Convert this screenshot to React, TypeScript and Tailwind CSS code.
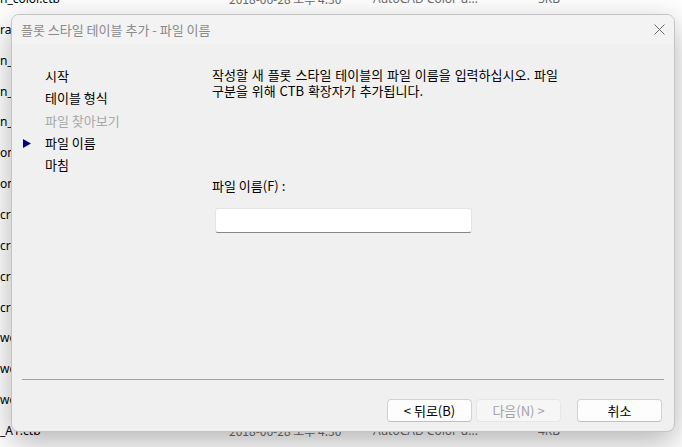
import React from "react";

const files = [
  { name: "n_color.ctb", date: "2018-06-28 오후 4:30", type: "AutoCAD Color-d...", size: "5KB" },
  { name: "rayscale.ctb" },
  { name: "n_color.ctb" },
  { name: "n_color.ctb" },
  { name: "n_color.ctb" },
  { name: "ome.ctb" },
  { name: "ome.ctb" },
  { name: "creening 100%.ctb" },
  { name: "creening 25%.ctb" },
  { name: "creening 50%.ctb" },
  { name: "creening 75%.ctb" },
  { name: "wc.ctb" },
  { name: "wc.ctb" },
  { name: "wc.ctb" },
  { name: "_A1.ctb", date: "2018-06-28 오후 4:30", type: "AutoCAD Color-d...", size: "4KB" },
];

const steps = [
  { label: "시작", state: "done" },
  { label: "테이블 형식", state: "done" },
  { label: "파일 찾아보기", state: "skip" },
  { label: "파일 이름", state: "current" },
  { label: "마침", state: "done" },
];

const korean = { fontFamily: '"Noto Sans CJK KR", "Noto Sans", sans-serif' };

const FileList = () => (
  <div className="mt-[-16.4px] flex flex-col text-[12px]" style={{ fontFamily: '"Noto Sans", "Noto Sans CJK KR", sans-serif' }}>
    {files.map((f, i) => (
      <div key={i} className="h-[30.86px] flex items-center relative">
        <span className="text-black whitespace-nowrap">{f.name}</span>
        {f.date && (
          <>
            <span className="absolute left-[229px] text-[#6b6b6b] whitespace-nowrap" style={korean}>{f.date}</span>
            <span className="absolute left-[373px] text-[#6b6b6b] whitespace-nowrap">{f.type}</span>
            <span className="absolute left-[538px] text-[#6b6b6b] whitespace-nowrap">{f.size}</span>
          </>
        )}
      </div>
    ))}
  </div>
);

const Btn = ({ label, disabled }: { label: string; disabled?: boolean }) => (
  <button
    className={
      disabled
        ? "h-[23px] w-[85px] rounded-[4px] border border-[#e6e6e6] bg-[#f6f6f6] text-[13px] leading-[16px] text-[#a2a2a2]"
        : "h-[23px] w-[85px] rounded-[4px] border border-[#d2d2d2] border-b-[#c0c0c0] bg-[#fdfdfd] text-[13px] leading-[16px] text-black"
    }
    style={korean}
  >
    {label}
  </button>
);

const Dialog = () => (
  <div
    className="absolute left-[11px] top-[14px] w-[664px] h-[418px] rounded-[8px] border border-[#c4c4c4] bg-[#f0f0f0] overflow-hidden shadow-[0_10px_32px_rgba(0,0,0,0.30)]"
    style={korean}
  >
    {/* title bar */}
    <div className="h-[29px] bg-[#f3f3f3] flex items-center justify-between pl-[9px] pr-[9px]">
      <span className="text-[13px] leading-[16px] text-[#8a8a8a]">플롯 스타일 테이블 추가 - 파일 이름</span>
      <svg width="11" height="11" viewBox="0 0 11 11">
        <path d="M0.5 0.5 L10.5 10.5 M10.5 0.5 L0.5 10.5" stroke="#6a6a6a" strokeWidth="1" fill="none" />
      </svg>
    </div>

    {/* body */}
    <div className="flex flex-col h-[387px]">
      <div className="h-[335px] flex">
        <div className="w-[200px] pt-[21px] flex flex-col">
          {steps.map((s) => (
            <div key={s.label} className="h-[22.3px] flex items-center pl-[11px] text-[13px] leading-[16px]">
              <div className="w-[22px] flex items-center">
                {s.state === "current" && (
                  <svg width="8" height="9" viewBox="0 0 8 9">
                    <polygon points="0,0 8,4.5 0,9" fill="#000080" />
                  </svg>
                )}
              </div>
              <span className={s.state === "skip" ? "text-[#a9a9a9]" : "text-black"}>{s.label}</span>
            </div>
          ))}
        </div>
        <div className="flex-1 pt-[23px] text-[13px] text-black">
          <p className="leading-[16px] [word-spacing:1px]">
            작성할 새 플롯 스타일 테이블의 파일 이름을 입력하십시오. 파일
            <br />
            구분을 위해 CTB 확장자가 추가됩니다.
          </p>
          <p className="leading-[16px] mt-[79px]">파일 이름(F) :</p>
          <div className="mt-[14px] ml-[3px] h-[25px] w-[257px] rounded-[3px] border border-[#e4e4e4] border-b-[#868686] bg-white" />
        </div>
      </div>
      <div className="mx-[10px] h-px bg-[#a0a0a0]" />
      <div className="mt-[19px] flex justify-end pr-[12px]">
        <Btn label="< 뒤로(B)" />
        <div className="w-[4px]" />
        <Btn label="다음(N) >" disabled />
        <div className="w-[16px]" />
        <Btn label="취소" />
      </div>
    </div>
  </div>
);

export default function App() {
  return (
    <div className="relative w-[682px] h-[447px] bg-white overflow-hidden">
      <FileList />
      <Dialog />
    </div>
  );
}
